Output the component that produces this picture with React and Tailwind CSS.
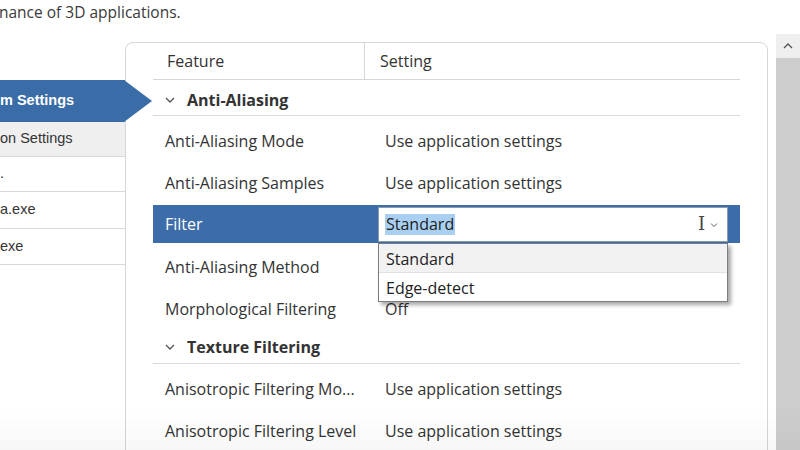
import React from 'react';

const ui = { fontFamily: '"Open Sans", "Noto Sans", sans-serif' };
const arial = { fontFamily: '"Liberation Sans", Arial, sans-serif' };

const Chevron = ({ up }) => (
  <svg width="10" height="6" viewBox="0 0 10 6" className={up ? 'rotate-180' : ''}>
    <path d="M1 1 L5 5 L9 1" fill="none" stroke="#555" strokeWidth="1.3" />
  </svg>
);

const GroupRow = ({ label, h }) => (
  <div className={`flex items-center pt-[4px] border-b border-[#dadada] ${h}`}>
    <div className="w-[34px] pl-[12px] flex items-center">
      <Chevron />
    </div>
    <span className="text-[16px] font-bold text-[#333]">{label}</span>
  </div>
);

const Row = ({ feature, setting }) => (
  <div className="flex items-center h-[42px] pt-[7px] text-[16px] text-[#333]">
    <div className="w-[212px] pl-[12px] truncate">{feature}</div>
    <div className="pl-[20px]">{setting}</div>
  </div>
);

const sideRows = [
  { label: 'on Settings', cls: 'bg-[#efefef] h-[35px] border-b border-[#d9d9d9]' },
  { label: '.', cls: 'h-[35px] border-b border-[#d9d9d9]' },
  { label: 'a.exe', cls: 'h-[37px] border-b border-[#d9d9d9]' },
  { label: 'exe', cls: 'h-[36px] border-b border-[#d9d9d9]' },
];

export default function App() {
  return (
    <div className="relative w-[800px] h-[450px] overflow-hidden bg-white" style={ui}>
      {/* description line, cut off at the left edge */}
      <div className="h-[34px] -ml-[1px] text-[15.5px] text-[#3a3a3a] leading-[24px]">
        nance of 3D applications.
      </div>

      <div className="flex">
        {/* left nav */}
        <div className="w-[125px] shrink-0 mt-[46px]" style={arial}>
          <div className="relative h-[42px] bg-[#3a6ca7] text-white text-[14.5px] font-bold flex items-center">
            m Settings
            <div className="absolute left-[124px] top-0 w-0 h-0 border-y-[21px] border-y-transparent border-l-[28px] border-l-[#3a6ca7] z-10" />
          </div>
          {sideRows.map((r) => (
            <div key={r.label} className={`flex items-center text-[14.5px] text-[#333] ${r.cls}`}>
              {r.label}
            </div>
          ))}
        </div>

        {/* settings card */}
        <div className="w-[643px] shrink-0 mt-[8px] h-[420px] border border-[#d6d6d6] rounded-t-[8px] pl-[27px] pr-[27px]">
          <div className="flex h-[37px] border-b border-[#d6d6d6] text-[16px] text-[#333]">
            <div className="w-[212px] pl-[14px] flex items-center border-r border-[#d6d6d6]">Feature</div>
            <div className="pl-[15px] flex items-center">Setting</div>
          </div>

          <GroupRow label="Anti-Aliasing" h="h-[36px]" />
          <Row feature="Anti-Aliasing Mode" setting="Use application settings" />
          <Row feature="Anti-Aliasing Samples" setting="Use application settings" />

          {/* selected row with open combo */}
          <div className="relative h-[42px] pt-[5px]">
            <div className="flex items-center h-[38px] bg-[#3c6da8] text-[16px] text-white">
              <div className="w-[212px] pl-[12px]">Filter</div>
              <div className="relative ml-[13px] w-[350px] h-[35px] bg-white border border-[#8a9bb0] flex items-center pl-[6px] text-[#222]">
                <span className="bg-[#a9d0f3] px-[1px] leading-[21px]">Standard</span>
                <span className="absolute right-[22px] top-[7px] text-[#444] text-[18px] leading-[18px]" style={{ fontFamily: '"DejaVu Serif", serif' }}>I</span>
                <div className="absolute right-[8px] top-[14px] scale-75">
                  <Chevron />
                </div>
              </div>
            </div>
            {/* dropdown list */}
            <div className="absolute left-[225px] top-[43px] w-[350px] bg-white border border-[#7d7d7d] shadow-[3px_3px_4px_rgba(0,0,0,0.35)] z-20 text-[16px] text-[#222]">
              <div className="h-[29px] flex items-center pl-[7px] pt-[2px] bg-[#f2f2f2] border-b border-[#e2e2e2]">Standard</div>
              <div className="h-[28px] flex items-center pl-[7px] pt-[2px]">Edge-detect</div>
            </div>
          </div>

          <Row feature="Anti-Aliasing Method" setting="" />
          <Row feature="Morphological Filtering" setting="Off" />
          <GroupRow label="Texture Filtering" h="h-[38px]" />
          <Row feature="Anisotropic Filtering Mo..." setting="Use application settings" />
          <Row feature="Anisotropic Filtering Level" setting="Use application settings" />
        </div>

        <div className="w-[8px] shrink-0" />

        {/* scrollbar */}
        <div className="w-[24px] shrink-0 h-[420px] bg-[#cdcdcd] flex flex-col">
          <div className="h-[24px] bg-[#efefef] flex items-center justify-center">
            <Chevron up />
          </div>
        </div>
      </div>

      {/* soft fade at the bottom */}
      <div className="pointer-events-none absolute left-0 right-0 bottom-0 h-[40px] bg-gradient-to-b from-transparent to-[#00000008]" />
    </div>
  );
}
